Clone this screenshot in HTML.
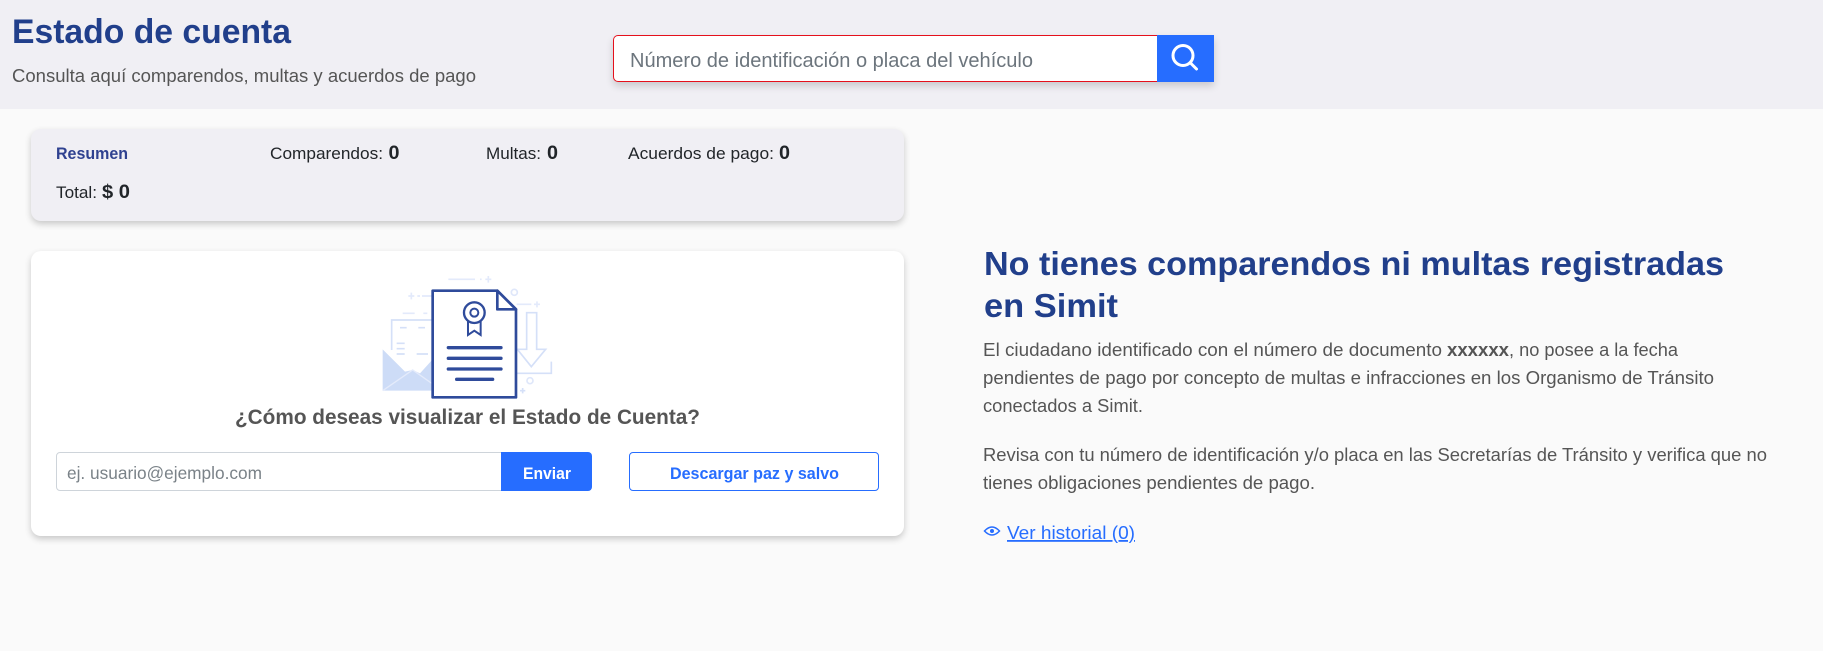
<!DOCTYPE html>
<html lang="es"><head><meta charset="utf-8"><title>Estado de cuenta</title>
<style>
html,body{margin:0;padding:0;width:1823px;height:651px;overflow:hidden;background:#fafafa}
.b{position:absolute;box-sizing:border-box}
svg{position:absolute;left:0;top:0}
text{font-family:"Liberation Sans",sans-serif;white-space:pre}
</style></head><body>
<div class="b" style="left:0;top:0;width:1823px;height:109px;background:#f0eff4"></div>
<div class="b" style="left:613px;top:35px;width:601px;height:47px;box-shadow:0 4px 8px rgba(0,0,0,.16);border-radius:5px 0 0 5px"></div>
<div class="b" style="left:613px;top:35px;width:545px;height:47px;background:#fff;border:1px solid #e5101c;border-right:0;border-radius:5px 0 0 5px"></div>
<div class="b" style="left:1157px;top:35px;width:57px;height:47px;background:#266dff"></div>
<div class="b" style="left:31px;top:129px;width:873px;height:92px;background:#f0eff4;border-radius:10px;box-shadow:0 3px 7px rgba(0,0,0,.2)"></div>
<div class="b" style="left:31px;top:251px;width:873px;height:285px;background:#fff;border-radius:10px;box-shadow:0 3px 7px rgba(0,0,0,.2)"></div>
<div class="b" style="left:56px;top:452px;width:446px;height:39px;background:#fff;border:1px solid #ced4da;border-radius:4px 0 0 4px"></div>
<div class="b" style="left:501px;top:452px;width:91px;height:39px;background:#266dff;border-radius:0 4px 4px 0"></div>
<div class="b" style="left:629px;top:452px;width:250px;height:39px;background:#fff;border:1px solid #266dff;border-radius:4px"></div>
<svg width="1823" height="651" viewBox="0 0 1823 651" xmlns="http://www.w3.org/2000/svg">
<g fill="#213f8b" font-weight="700">
<text x="12" y="43" font-size="34" textLength="279" lengthAdjust="spacingAndGlyphs">Estado de cuenta</text>
<text x="984" y="275" font-size="33" textLength="740" lengthAdjust="spacingAndGlyphs">No tienes comparendos ni multas registradas</text>
<text x="984" y="317" font-size="33" textLength="134" lengthAdjust="spacingAndGlyphs">en Simit</text>
</g>
<text x="12" y="82" font-size="18.500" fill="#555" textLength="464" lengthAdjust="spacingAndGlyphs">Consulta aquí comparendos, multas y acuerdos de pago</text>
<text x="630" y="67" font-size="20.500" fill="#6c757d" textLength="403" lengthAdjust="spacingAndGlyphs">Número de identificación o placa del vehículo</text>
<g fill="none" stroke="#fff" stroke-width="3" stroke-linecap="round"><circle cx="1183" cy="55.500" r="10"/><path d="M1191 63.500l5.500 5.500"/></g>

<text x="56" y="159" font-size="16.500" font-weight="700" fill="#2f4190" textLength="72" lengthAdjust="spacingAndGlyphs">Resumen</text>
<g fill="#212529" font-size="16.500">
<text x="270" y="159" textLength="113" lengthAdjust="spacingAndGlyphs">Comparendos:</text>
<text x="388.500" y="159" font-size="19" font-weight="700" textLength="11" lengthAdjust="spacingAndGlyphs">0</text>
<text x="486" y="159" textLength="55" lengthAdjust="spacingAndGlyphs">Multas:</text>
<text x="547" y="159" font-size="19" font-weight="700" textLength="11" lengthAdjust="spacingAndGlyphs">0</text>
<text x="628" y="159" textLength="146" lengthAdjust="spacingAndGlyphs">Acuerdos de pago:</text>
<text x="779" y="159" font-size="19" font-weight="700" textLength="11" lengthAdjust="spacingAndGlyphs">0</text>
<text x="56" y="198" textLength="41" lengthAdjust="spacingAndGlyphs">Total:</text>
<text x="102" y="198" font-size="19" font-weight="700" textLength="28" lengthAdjust="spacingAndGlyphs">$ 0</text>
</g>

<g transform="translate(360 270) scale(.3333)">
<g fill="none" stroke="#dfe7fa" stroke-width="5">
<path d="M265 28H345M360 28h5M376 28h18M385 18v20M145 78h18M154 68v20M172 78h8M186 78h32M128 130h36M190 130h12M470 103h44M522 103h18M531 94v18" stroke="#e3eafb"/>
<path d="M95 240V150H222M500 128h30v110h27l-43 52-42-52h28z" stroke="#d5e0f8"/>
<circle cx="463" cy="67" r="9"/><circle cx="510" cy="332" r="9"/>
<path d="M574 275v35H470M488 354v16M480 362h16M120 173h20M175 173h20M110 220h24M110 236h24M110 252h24M170 252h34" stroke="#d5e0f8"/>
</g>
<path d="M68 238L135 305L158 300L180 310L218 268V362H68Z" fill="#cddcf7"/>
<path d="M68 362l90-62 60 42" fill="none" stroke="#e4ebfb" stroke-width="4"/>
<path d="M218 62H412L468 118V382H218Z" fill="#fff" stroke="#2f4b9b" stroke-width="8" stroke-linejoin="round"/>
<path d="M412 62V118H468Z" fill="#fff" stroke="#2f4b9b" stroke-width="8" stroke-linejoin="round"/>
<g fill="none" stroke="#2f4b9b">
<circle cx="343" cy="128" r="31" stroke-width="7"/><circle cx="343" cy="128" r="12" stroke-width="6"/>
<path d="M324 153V195L343 182L362 195V153" stroke-width="6"/>
<path d="M265 233H423M265 265H423M265 297H423M290 328H398" stroke-width="10" stroke-linecap="round"/>
</g></g>

<text x="235" y="424" font-size="21.500" font-weight="700" fill="#555" textLength="465" lengthAdjust="spacingAndGlyphs">¿Cómo deseas visualizar el Estado de Cuenta?</text>
<text x="67" y="479" font-size="17.500" fill="#7a8288" textLength="195" lengthAdjust="spacingAndGlyphs">ej. usuario@ejemplo.com</text>
<text x="523" y="479" font-size="16.500" font-weight="700" fill="#fff" textLength="48" lengthAdjust="spacingAndGlyphs">Enviar</text>
<text x="670" y="479" font-size="16.500" font-weight="700" fill="#266dff" textLength="169" lengthAdjust="spacingAndGlyphs">Descargar paz y salvo</text>

<g fill="#555" font-size="18">
<text x="983" y="356" textLength="459" lengthAdjust="spacingAndGlyphs">El ciudadano identificado con el número de documento</text>
<text x="1447" y="356" font-weight="700" textLength="62" lengthAdjust="spacingAndGlyphs">xxxxxx</text>
<text x="1509" y="356" textLength="169" lengthAdjust="spacingAndGlyphs">, no posee a la fecha</text>
<text x="983" y="384" textLength="731" lengthAdjust="spacingAndGlyphs">pendientes de pago por concepto de multas e infracciones en los Organismo de Tránsito</text>
<text x="983" y="412" textLength="160" lengthAdjust="spacingAndGlyphs">conectados a Simit.</text>
<text x="983" y="461" textLength="784" lengthAdjust="spacingAndGlyphs">Revisa con tu número de identificación y/o placa en las Secretarías de Tránsito y verifica que no</text>
<text x="983" y="489" textLength="332" lengthAdjust="spacingAndGlyphs">tienes obligaciones pendientes de pago.</text>
</g>
<text x="1007" y="539" font-size="18" fill="#266dff" text-decoration="underline" textLength="128" lengthAdjust="spacingAndGlyphs">Ver historial (0)</text>
<path d="M984.500 531q7.500-8 15 0q-7.500 8-15 0z" fill="none" stroke="#266dff" stroke-width="1.500"/><circle cx="992" cy="531" r="2" fill="#266dff"/>
</svg>
</body></html>
